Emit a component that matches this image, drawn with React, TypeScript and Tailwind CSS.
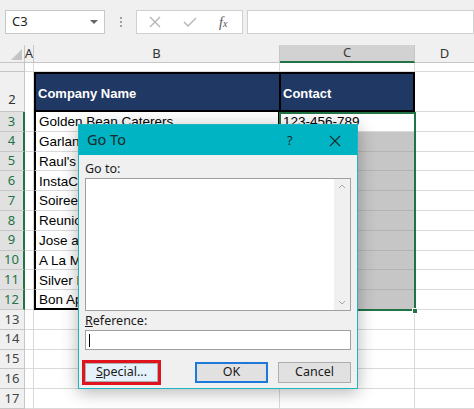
import React from "react";

const rows3 = [
  { n: 3, b: "Golden Bean Caterers", c: "123-456-789" },
  { n: 4, b: "Garland Catering", c: "" },
  { n: 5, b: "Raul's Catering", c: "" },
  { n: 6, b: "InstaCater", c: "" },
  { n: 7, b: "Soiree Services", c: "" },
  { n: 8, b: "Reunion Events", c: "" },
  { n: 9, b: "Jose and Sons", c: "" },
  { n: 10, b: "A La Mode", c: "" },
  { n: 11, b: "Silver Platter", c: "" },
  { n: 12, b: "Bon Appetit", c: "" },
  { n: 13, b: "", c: "" },
  { n: 14, b: "", c: "" },
  { n: 15, b: "", c: "" },
  { n: 16, b: "", c: "" },
  { n: 17, b: "", c: "" },
];

const cellFont = { fontFamily: '"Liberation Sans", Arial, sans-serif' };
const uiFont = { fontFamily: '"Noto Sans", "Open Sans", sans-serif' };

export default function App() {
  return (
    <div className="relative w-[474px] h-[409px] overflow-hidden bg-white" style={cellFont}>
      {/* toolbar */}
      <div className="h-[45px] bg-[#f0f0f0] flex items-start pt-[10px] pl-[5px]">
        <div className="w-[100px] h-[24px] bg-white border border-[#c8c8c8] flex items-center justify-between px-[6px]">
          <span className="text-[13px] text-[#222]" style={uiFont}>C3</span>
          <span className="w-0 h-0 border-l-[4px] border-r-[4px] border-t-[4px] border-l-transparent border-r-transparent border-t-[#666]" />
        </div>
        <div className="w-[31px] h-[24px] flex flex-col items-center justify-center gap-[2px]">
          <span className="w-[2px] h-[2px] bg-[#a0a0a0]" />
          <span className="w-[2px] h-[2px] bg-[#a0a0a0]" />
          <span className="w-[2px] h-[2px] bg-[#a0a0a0]" />
        </div>
        <div className="w-[107px] h-[24px] bg-white border border-[#d0d0d0] flex items-center">
          <svg width="14" height="14" viewBox="0 0 14 14" className="ml-[11px]">
            <path d="M2 2 L12 12 M12 2 L2 12" stroke="#b5b5b5" strokeWidth="1.4" fill="none" />
          </svg>
          <svg width="16" height="14" viewBox="0 0 16 14" className="ml-[20px]">
            <path d="M2 7 L6 11 L14 3" stroke="#b5b5b5" strokeWidth="1.4" fill="none" />
          </svg>
          <span className="ml-[21px] text-[14px] italic text-[#555]" style={{ fontFamily: '"Liberation Serif", serif' }}>
            f<span className="text-[10px]">x</span>
          </span>
        </div>
        <div className="ml-[4px] flex-1 h-[24px] bg-white border border-[#d0d0d0]" />
      </div>

      {/* column headers */}
      <div className="flex h-[18px] text-[13px] text-[#333]" style={uiFont}>
        <div className="w-[25px] bg-[#f0f0f0] border-r border-b border-[#c6c6c6] flex items-end justify-end pr-[2px] pb-[2px]">
          <svg width="11" height="11" viewBox="0 0 11 11">
            <path d="M11 0 L11 11 L0 11 Z" fill="#c4c4c4" />
          </svg>
        </div>
        <div className="w-[9px] bg-[#f0f0f0] border-r border-b border-[#c6c6c6] flex items-center justify-center leading-none">A</div>
        <div className="w-[246px] bg-[#f0f0f0] border-r border-b border-[#c6c6c6] flex items-center justify-center">B</div>
        <div className="w-[135px] bg-[#d2d2d2] border-r border-[#c6c6c6] border-b-2 border-b-[#217346] flex items-center justify-center text-[#3a3a3a]">C</div>
        <div className="flex-1 bg-[#f0f0f0] border-b border-[#c6c6c6] flex items-center justify-center">D</div>
      </div>

      {/* row 1 */}
      <div className="flex h-[9px]">
        <div className="w-[25px] bg-[#f0f0f0] border-r border-b border-[#c6c6c6]" />
        <div className="w-[9px] border-r border-b border-[#dadada]" />
        <div className="w-[246px] border-r border-b border-[#dadada]" />
        <div className="w-[135px] border-r border-b border-[#dadada]" />
        <div className="flex-1 border-b border-[#dadada]" />
      </div>

      {/* row 2 */}
      <div className="flex h-[40px]">
        <div className="w-[25px] bg-[#f0f0f0] border-r border-b border-[#c6c6c6] flex items-end justify-center pb-[2px] text-[13px] text-[#333]" style={uiFont}>2</div>
        <div className="w-[9px] border-r border-[#dadada]" />
        <div className="w-[381px] flex bg-[#1f3864] border-2 border-black text-white font-bold text-[13px]">
          <div className="w-[245px] border-r-2 border-black flex items-center pl-[2px] pt-[4px]">Company Name</div>
          <div className="flex-1 flex items-center pl-[2px] pt-[4px]">Contact</div>
        </div>
        <div className="flex-1 border-b border-[#dadada]" />
      </div>

      {/* rows 3-17 */}
      {rows3.map((r) => {
        const sel = r.n <= 12;
        const inTable = r.n <= 12;
        return (
          <div key={r.n} className="flex h-[19.8px] text-[13.5px] text-black">
            <div
              className={
                "w-[25px] border-b flex items-center justify-center text-[13px] " +
                (sel
                  ? "bg-[#e1e1e1] text-[#217346] border-b-[#c6c6c6] border-r-2 border-r-[#217346]"
                  : "bg-[#f0f0f0] text-[#444] border-b-[#c6c6c6] border-r border-r-[#c6c6c6]")
              }
              style={uiFont}
            >
              {r.n}
            </div>
            <div className="w-[9px] border-r border-b border-[#dadada]" />
            <div
              className={
                "w-[246px] flex items-center pl-[3px] pt-[2px] whitespace-nowrap overflow-hidden " +
                (inTable
                  ? "border-l-2 border-l-black border-r-2 border-r-black border-b " +
                    (r.n === 12 ? "border-b-2 border-b-black" : "border-b-[#dadada]")
                  : "border-r border-b border-[#dadada]")
              }
            >
              {r.b}
            </div>
            <div
              className={
                "w-[135px] flex items-center pl-[3px] pt-[2px] border-r border-b border-[#dadada] " +
                (r.n >= 4 && r.n <= 12 ? "bg-[#c6c6c6] border-b-[#b4b4b4]" : "")
              }
            >
              {r.c}
            </div>
            <div className="flex-1 border-b border-[#dadada]" />
          </div>
        );
      })}

      {/* selection border */}
      <div className="absolute left-[279px] top-[112px] w-[137px] h-[199px] border-2 border-[#217346] pointer-events-none" />
      <div className="absolute left-[412px] top-[308px] w-[6px] h-[6px] bg-[#217346] border border-white" />

      {/* dialog */}
      <div
        className="absolute left-[78px] top-[124px] w-[280px] h-[265px] bg-[#f0f0f0] border border-[#1fb5c1] shadow-[0_3px_16px_rgba(0,0,0,0.3)]"
        style={uiFont}
      >
        <div className="h-[30px] bg-[#00b4c3] flex items-center relative">
          <span className="ml-[8px] text-[14.5px] text-[#1a2a2a]">Go To</span>
          <span className="absolute left-[208px] top-[6px] text-[13px] text-[#1a2a2a]">?</span>
          <svg width="12" height="12" viewBox="0 0 12 12" className="absolute left-[250px] top-[10px]">
            <path d="M1 1 L11 11 M11 1 L1 11" stroke="#1a2a2a" strokeWidth="1.1" fill="none" />
          </svg>
        </div>
        <div className="px-[6px]">
          <div className="mt-[6px] text-[12.5px] text-[#1a1a1a] leading-[16px]">Go to:</div>
          <div className="mt-[1px] h-[133px] bg-white border border-[#a0a0a0] flex justify-end">
            <div className="w-[16px] h-full bg-[#f0f0f0] flex flex-col items-center justify-between py-[4px]">
              <svg width="8" height="6" viewBox="0 0 8 6">
                <path d="M1 5 L4 2 L7 5" stroke="#a6a6a6" strokeWidth="1" fill="none" />
              </svg>
              <svg width="8" height="6" viewBox="0 0 8 6">
                <path d="M1 1 L4 4 L7 1" stroke="#a6a6a6" strokeWidth="1" fill="none" />
              </svg>
            </div>
          </div>
          <div className="mt-[2px] text-[12.5px] text-[#1a1a1a] leading-[16px]">
            <span className="underline">R</span>eference:
          </div>
          <div className="mt-[1px] h-[20px] bg-white border border-[#a0a0a0] flex items-center">
            <span className="ml-[3px] w-px h-[13px] bg-black" />
          </div>
          <div className="mt-[10px] flex items-start">
            <div className="-ml-[3px] w-[79px] h-[25px] border-[3px] border-[#e0141e] flex">
              <div className="flex-1 bg-[#e5f1fb] border border-[#b0b0b0] flex items-center justify-center text-[12.5px] text-[#1a1a1a]">
                <span><span className="underline">S</span>pecial...</span>
              </div>
            </div>
            <div className="ml-[34px] mt-[2px] w-[73px] h-[21px] bg-[#e1e1e1] border-2 border-[#1e78d7] flex items-center justify-center text-[12.5px] text-[#1a1a1a]">
              OK
            </div>
            <div className="ml-[10px] mt-[2px] w-[73px] h-[21px] bg-[#e1e1e1] border border-[#adadad] flex items-center justify-center text-[12.5px] text-[#1a1a1a]">
              Cancel
            </div>
          </div>
        </div>
      </div>
    </div>
  );
}
